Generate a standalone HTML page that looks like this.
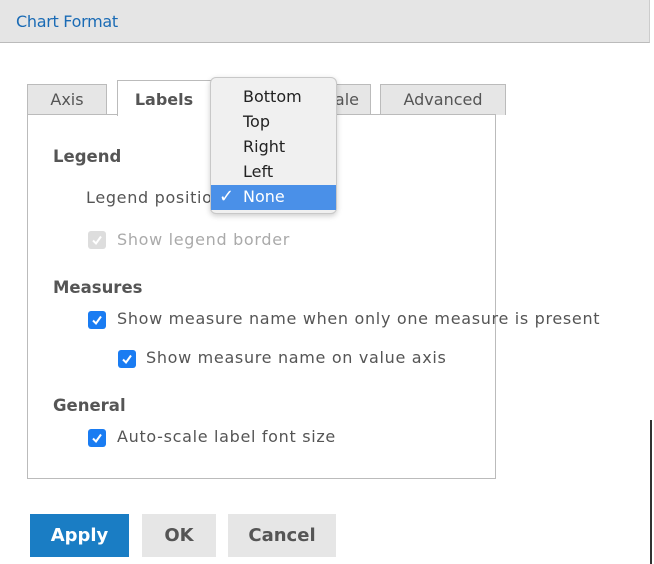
<!DOCTYPE html><html><head><style>
body{margin:0;width:654px;height:564px;background:#fff;font-family:"DejaVu Sans","Liberation Sans",sans-serif;position:relative;overflow:hidden;color:#555}
.hdr{position:absolute;left:0;top:0;width:649px;height:42px;background:#e5e5e5;border-bottom:1px solid #bbb;border-right:1px solid #ccc}
.hdr span{position:absolute;left:16px;top:12px;font-size:16px;color:#1a6bb5;letter-spacing:-0.3px}
.a{position:absolute;white-space:nowrap}
.tab{position:absolute;background:#e6e6e6;border:1px solid #bbb;border-bottom:none;font-size:16px;color:#555;text-align:center;box-sizing:border-box}
.panel{position:absolute;left:27px;top:114px;width:469px;height:365px;border:1px solid #bbb;box-sizing:border-box}
.b{font-weight:bold;font-size:16.5px;color:#555}
.t{font-size:16px;color:#555;letter-spacing:0.68px}
.cb{position:absolute;width:18px;height:18px;border-radius:3px;background:#1a7cf2}
.cb svg{position:absolute;left:2px;top:2px}
.btn{position:absolute;top:514px;height:43px;font-size:18px;font-weight:bold;text-align:center;line-height:43px;background:#e6e6e6;color:#555}
.dd{position:absolute;left:210px;top:77px;width:127px;height:137px;background:#f0f0f0;border:1px solid #c8c8c8;border-radius:6px;box-shadow:0 2px 6px rgba(0,0,0,.2);box-sizing:border-box;font-size:16px;color:#222}
.dd div{position:absolute;left:32px}
</style></head><body>
<div class="hdr"><span>Chart Format</span></div>
<div style="position:absolute;left:650px;top:420px;width:2px;height:144px;background:#333"></div>
<div class="tab" style="left:27px;top:84px;width:80px;height:31px;padding-top:5px">Axis</div>
<div class="tab" style="left:294px;top:84px;width:77px;height:31px;padding-top:5px;padding-left:10px">Scale</div>
<div class="tab" style="left:380px;top:84px;width:126px;height:31px;padding-top:5px">Advanced</div>
<div class="panel"></div>
<div class="tab" style="left:117px;top:80px;width:100px;height:36px;background:#fff;padding-top:9px;font-weight:bold;padding-right:6px">Labels</div>
<div class="a b" style="left:53px;top:147px">Legend</div>
<div class="a t" style="left:86px;top:188px">Legend position</div>
<div class="cb" style="left:88px;top:231px;background:#ddd"><svg width="14" height="14"><path d="M3 7.5l3 3 5-7" stroke="#fff" stroke-width="2" fill="none"/></svg></div>
<div class="a t" style="left:117px;top:230px;color:#aaa">Show legend border</div>
<div class="a b" style="left:53px;top:278px">Measures</div>
<div class="cb" style="left:88px;top:311px"><svg width="14" height="14"><path d="M3 7.5l3 3 5-7" stroke="#fff" stroke-width="2" fill="none"/></svg></div>
<div class="a t" style="left:117px;top:309px">Show measure name when only one measure is present</div>
<div class="cb" style="left:118px;top:350px"><svg width="14" height="14"><path d="M3 7.5l3 3 5-7" stroke="#fff" stroke-width="2" fill="none"/></svg></div>
<div class="a t" style="left:146px;top:348px">Show measure name on value axis</div>
<div class="a b" style="left:53px;top:396px">General</div>
<div class="cb" style="left:88px;top:429px"><svg width="14" height="14"><path d="M3 7.5l3 3 5-7" stroke="#fff" stroke-width="2" fill="none"/></svg></div>
<div class="a t" style="left:117px;top:427px">Auto-scale label font size</div>
<div class="btn" style="left:30px;width:99px;background:#1a7dc4;color:#fff">Apply</div>
<div class="btn" style="left:142px;width:74px">OK</div>
<div class="btn" style="left:228px;width:108px">Cancel</div>
<div class="dd">
<div style="top:9px">Bottom</div><div style="top:34px">Top</div><div style="top:59px">Right</div><div style="top:84px">Left</div>
<div style="left:0;top:107px;width:125px;height:25px;background:#4a90e8"></div>
<div style="top:109px;color:#fff">None</div>
<div style="left:8px;top:108px;color:#fff;font-size:18px">✓</div>
</div>
</body></html>
